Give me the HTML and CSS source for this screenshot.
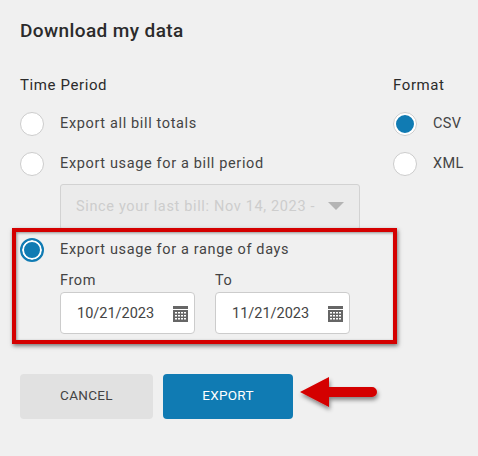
FILE: index.html
```html
<!DOCTYPE html>
<html lang="en">
<head>
    <meta charset="UTF-8">
    <title>Download my data</title>
    <link rel="stylesheet" href="styles.css">
</head>
<body>

<div class="dialog">
    <h1>Download my data</h1>

    <div class="columns">
        <div class="time-col">
            <div class="col-title">Time Period</div>
            <div class="option"><span class="radio"></span><span class="option-text">Export all bill totals</span></div>
            <div class="option"><span class="radio"></span><span class="option-text">Export usage for a bill period</span></div>
            <div class="select-box">
                <span class="select-text">Since your last bill: Nov 14, 2023 -</span>
                <span class="select-arrow"></span>
            </div>
            <div class="option range-option"><span class="radio checked"></span><span class="option-text">Export usage for a range of days</span></div>
            <div class="dates">
                <div class="date-field">
                    <div class="date-label">From</div>
                    <div class="date-input">10/21/2023
                        <svg class="cal" width="15" height="16" viewBox="0 0 15 16"><path fill="#666" fill-rule="evenodd" d="M0 0h15v3H0zM0 4h15v12H0zM2 6v1.5h2V6zM5 6v1.5h2V6zM8 6v1.5h2V6zM11 6v1.5h2V6zM2 9v1.5h2V9zM5 9v1.5h2V9zM8 9v1.5h2V9zM11 9v1.5h2V9zM2 12v1.5h2V12zM5 12v1.5h2V12zM8 12v1.5h2V12zM11 12v1.5h2V12z"/></svg>
                    </div>
                </div>
                <div class="date-field">
                    <div class="date-label">To</div>
                    <div class="date-input">11/21/2023
                        <svg class="cal" width="15" height="16" viewBox="0 0 15 16"><path fill="#666" fill-rule="evenodd" d="M0 0h15v3H0zM0 4h15v12H0zM2 6v1.5h2V6zM5 6v1.5h2V6zM8 6v1.5h2V6zM11 6v1.5h2V6zM2 9v1.5h2V9zM5 9v1.5h2V9zM8 9v1.5h2V9zM11 9v1.5h2V9zM2 12v1.5h2V12zM5 12v1.5h2V12zM8 12v1.5h2V12zM11 12v1.5h2V12z"/></svg>
                    </div>
                </div>
            </div>
        </div>
        <div class="format-col">
            <div class="col-title">Format</div>
            <div class="option short"><span class="radio checked-plain"></span><span class="option-text">CSV</span></div>
            <div class="option short"><span class="radio"></span><span class="option-text">XML</span></div>
        </div>
    </div>

    <div class="buttons">
        <button class="cancel-button">CANCEL</button>
        <button class="export-button">EXPORT</button>
    </div>
</div>

<!-- red annotations on top of the screenshot -->
<div class="mark-box"></div>
<svg class="mark-arrow" width="90" height="40" viewBox="0 0 90 40">
    <defs>
        <filter id="arrowShadow" x="-20%" y="-30%" width="140%" height="170%">
            <feDropShadow dx="1" dy="3" stdDeviation="2" flood-color="#000" flood-opacity="0.45"/>
        </filter>
    </defs>
    <path filter="url(#arrowShadow)" fill="#d40000" d="M4 16 33 1v10h43a5 5 0 0 1 0 10H33v10z"/>
</svg>

</body>
</html>
```

FILE: styles.css
```css
body {
    margin: 0;
    background-color: #f0f0f0;
    font-family: 'Roboto', 'Liberation Sans', sans-serif;
    color: #333;
}
.dialog {
    padding: 20px 0 0 20px;
}
h1 {
    margin: 0;
    font-size: 19px;
    line-height: 21px;
    font-weight: 500;
    letter-spacing: 0.4px;
    color: #2b2b2b;
}
.columns {
    display: flex;
    margin-top: 33px;
}
.time-col {
    width: 373px;
}
.col-title {
    font-size: 15px;
    line-height: 22px;
    letter-spacing: 0.6px;
    color: #2b2b2b;
    margin-bottom: 16px;
}
.option {
    display: flex;
    align-items: center;
    height: 24px;
    margin-bottom: 16px;
    font-size: 14.5px;
    letter-spacing: 0.64px;
    color: #444;
}
.short {
    letter-spacing: 0.35px;
}
.option-text {
    margin-top: -2px;
}
.radio {
    box-sizing: border-box;
    width: 24px;
    height: 24px;
    margin-right: 16px;
    border: 1px solid #ccc;
    border-radius: 50%;
    background-color: #fff;
    flex: none;
}
.checked-plain {
    border: 3px solid #fff;
    outline: 1px solid #ccc;
    outline-offset: -1px;
    background-color: #107bb3;
}
.checked {
    border: 2px solid #107bb3;
    box-shadow: inset 0 0 0 2px #fff;
    background-color: #107bb3;
}
.select-box {
    box-sizing: border-box;
    display: flex;
    align-items: center;
    width: 300px;
    height: 46px;
    margin: -8px 0 8px 40px;
    padding: 0 15px 2px;
    border: 1px solid #d2d2d2;
    border-radius: 3px;
    background-color: #ebebeb;
}
.select-text {
    flex: 1;
    white-space: nowrap;
    overflow: hidden;
    font-size: 14.5px;
    letter-spacing: 0.65px;
    color: #cdcdcd;
}
.select-arrow {
    width: 0;
    height: 0;
    margin-left: 8px;
    border-left: 8px solid transparent;
    border-right: 8px solid transparent;
    border-top: 8px solid #b4b4b4;
}
.range-option {
    margin-bottom: 9px;
}
.dates {
    display: flex;
    gap: 20px;
    margin-left: 40px;
}
.date-label {
    font-size: 14.5px;
    line-height: 20px;
    letter-spacing: 0.6px;
    color: #444;
    margin-bottom: 1px;
}
.date-input {
    box-sizing: border-box;
    display: flex;
    align-items: center;
    justify-content: space-between;
    width: 135px;
    height: 42px;
    padding: 0 6px 0 16px;
    border: 1px solid #ccc;
    border-radius: 4px;
    background-color: #fff;
    font-size: 14.5px;
    letter-spacing: 0;
    color: #444;
}
.cal {
    margin-top: 2px;
}
.buttons {
    display: flex;
    gap: 10px;
    margin-top: 40px;
}
button {
    height: 45px;
    padding: 0 0 3px;
    border: none;
    border-radius: 4px;
    font-family: inherit;
    font-size: 13.5px;
    letter-spacing: 0.3px;
}
.cancel-button {
    width: 133px;
    background-color: #e1e1e1;
    color: #444;
}
.export-button {
    width: 130px;
    background-color: #107bb3;
    color: #fff;
}
.mark-box {
    box-sizing: border-box;
    position: absolute;
    left: 12px;
    top: 228px;
    width: 385px;
    height: 116px;
    border: 4px solid #d40000;
    box-shadow: 1px 2px 4px rgba(0, 0, 0, 0.5), inset 1px 1px 3px rgba(0, 0, 0, 0.4);
}
.mark-arrow {
    position: absolute;
    left: 296px;
    top: 376px;
}
```
